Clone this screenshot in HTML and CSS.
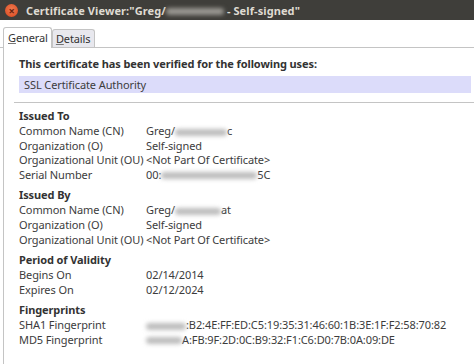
FILE: index.html
```html
<!DOCTYPE html>
<html lang="en">
<head>
    <meta charset="UTF-8">
    <title>Certificate Viewer</title>
    <link rel="stylesheet" href="styles.css">
</head>
<body>

    <div class="titlebar">
        <span class="close">&#215;</span>
        <span class="title">Certificate Viewer:"Greg/<span class="smudge wide"></span> - Self-signed"</span>
    </div>

    <div class="tabs">
        <div class="tab active"><u>G</u>eneral</div>
        <div class="tab"><u>D</u>etails</div>
    </div>

    <div class="panel">
        <p class="heading">This certificate has been verified for the following uses:</p>
        <div class="uses">SSL Certificate Authority</div>
        <hr class="sep">

        <div class="section">
            <h3>Issued To</h3>
            <div class="row"><span>Common Name (CN)</span><span>Greg/<span class="smudge" style="width: 52px"></span>c</span></div>
            <div class="row"><span>Organization (O)</span><span>Self-signed</span></div>
            <div class="row"><span>Organizational Unit (OU)</span><span>&lt;Not Part Of Certificate&gt;</span></div>
            <div class="row"><span>Serial Number</span><span>00:<span class="smudge" style="width: 96px"></span>5C</span></div>
        </div>

        <div class="section">
            <h3>Issued By</h3>
            <div class="row"><span>Common Name (CN)</span><span>Greg/<span class="smudge" style="width: 46px"></span>at</span></div>
            <div class="row"><span>Organization (O)</span><span>Self-signed</span></div>
            <div class="row"><span>Organizational Unit (OU)</span><span>&lt;Not Part Of Certificate&gt;</span></div>
        </div>

        <div class="section">
            <h3>Period of Validity</h3>
            <div class="row"><span>Begins On</span><span>02/14/2014</span></div>
            <div class="row"><span>Expires On</span><span>02/12/2024</span></div>
        </div>

        <div class="section">
            <h3>Fingerprints</h3>
            <div class="row"><span>SHA1 Fingerprint</span><span><span class="smudge" style="width: 40px"></span>:B2:4E:FF:ED:C5:19:35:31:46:60:1B:3E:1F:F2:58:70:82</span></div>
            <div class="row"><span>MD5 Fingerprint</span><span><span class="smudge" style="width: 36px"></span>A:FB:9F:2D:0C:B9:32:F1:C6:D0:7B:0A:09:DE</span></div>
        </div>
    </div>

</body>
</html>
```

FILE: styles.css
```css
body {
    margin: 0;
    background: #ffffff;
    font-family: "Noto Sans", "Open Sans", sans-serif;
    font-size: 11px;
    letter-spacing: -0.1px;
    color: #3c3c3c;
    overflow: hidden;
}
.titlebar {
    height: 20px;
    background: #3f3e3a;
    display: flex;
    align-items: center;
    padding-left: 5px;
    gap: 8px;
    white-space: nowrap;
}
.close {
    width: 13px;
    height: 13px;
    border-radius: 50%;
    background: radial-gradient(circle at 50% 40%, #f07a4f, #d8461d);
    color: #6a2410;
    font-size: 11px;
    line-height: 13px;
    text-align: center;
    font-weight: bold;
}
.title {
    color: #dfdbd2;
    font-weight: bold;
    font-size: 11px;
    letter-spacing: 0.1px;
}
.smudge {
    display: inline-block;
    height: 7px;
    width: 60px;
    border-radius: 4px;
    background: #bdbdbd;
    filter: blur(2px);
    vertical-align: middle;
}
.smudge.wide {
    width: 58px;
    background: #9a9892;
}
.tabs {
    display: flex;
    align-items: flex-end;
    margin-top: 7px;
    padding-left: 3px;
    border-bottom: 1px solid #c4c4c4;
}
.tab {
    padding: 0 3px;
    height: 17px;
    line-height: 17px;
    border: 1px solid #c4c4c4;
    border-bottom: none;
    border-radius: 3px 3px 0 0;
    background: #e8e8ee;
    font-size: 11px;
    color: #333;
}
.tab u {
    text-decoration-color: #777;
}
.tab.active {
    height: 19px;
    line-height: 20px;
    padding: 0 3px 1px 4px;
    background: #ffffff;
    margin-bottom: -1px;
}
.panel {
    margin-left: 3px;
    border-left: 1px solid #c4c4c4;
    padding: 8px 0 0 15px;
    height: 320px;
}
.heading {
    margin: 0;
    font-weight: bold;
    line-height: 16px;
    color: #333;
}
.uses {
    margin: 4px 3px 0 0;
    height: 17px;
    line-height: 17px;
    padding-left: 5px;
    background: #dcdcfa;
    color: #3c3c3c;
}
.sep {
    margin: 9px 0 0 -5px;
    border: none;
    border-top: 1px solid #c4c4c4;
}
.section {
    margin-top: 5px;
}
.section h3 {
    margin: 0;
    font-size: 11px;
    line-height: 16px;
    color: #333;
}
.row {
    display: grid;
    grid-template-columns: 127px 1fr;
    line-height: 14.6px;
    white-space: nowrap;
}
```
